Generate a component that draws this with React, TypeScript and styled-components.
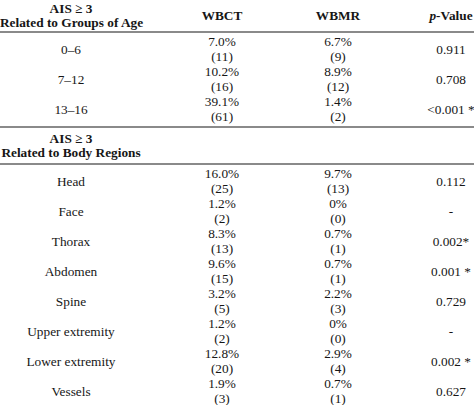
import React from "react";
import styled, { createGlobalStyle } from "styled-components";

const GlobalStyle = createGlobalStyle`
  html, body {
    margin: 0;
    padding: 0;
    background: #ffffff;
    overflow: hidden;
  }
  body {
    font-family: "Liberation Serif", "Times New Roman", serif;
    color: #161616;
  }
`;

const COLUMNS = "142px 160px 72px 154px";

const Table = styled.div`
  width: 528px;
  font-size: 13.3px;
`;

const HeadRow = styled.div<{ $height: number }>`
  display: grid;
  grid-template-columns: ${COLUMNS};
  height: ${(p) => p.$height}px;
  align-items: center;
  font-weight: 700;
  line-height: 14px;
  text-align: center;
`;

const HeadCell = styled.div`
  white-space: nowrap;
`;

const Rule = styled.div`
  height: 2px;
  background: #8a8a8a;
`;

const Body = styled.div<{ $top: number; $bottom: number }>`
  padding: ${(p) => p.$top}px 0 ${(p) => p.$bottom}px;
`;

const Row = styled.div`
  display: grid;
  grid-template-columns: ${COLUMNS};
  height: 30px;
  align-items: center;
  text-align: center;
  line-height: 15px;
`;

const Cell = styled.div`
  white-space: nowrap;
`;

const Italic = styled.span`
  font-style: italic;
`;

type DataRow = {
  label: string;
  wbct: [string, string];
  wbmr: [string, string];
  p: string;
};

const ageRows: DataRow[] = [
  { label: "0–6", wbct: ["7.0%", "(11)"], wbmr: ["6.7%", "(9)"], p: "0.911" },
  { label: "7–12", wbct: ["10.2%", "(16)"], wbmr: ["8.9%", "(12)"], p: "0.708" },
  { label: "13–16", wbct: ["39.1%", "(61)"], wbmr: ["1.4%", "(2)"], p: "<0.001 *" },
];

const regionRows: DataRow[] = [
  { label: "Head", wbct: ["16.0%", "(25)"], wbmr: ["9.7%", "(13)"], p: "0.112" },
  { label: "Face", wbct: ["1.2%", "(2)"], wbmr: ["0%", "(0)"], p: "-" },
  { label: "Thorax", wbct: ["8.3%", "(13)"], wbmr: ["0.7%", "(1)"], p: "0.002*" },
  { label: "Abdomen", wbct: ["9.6%", "(15)"], wbmr: ["0.7%", "(1)"], p: "0.001 *" },
  { label: "Spine", wbct: ["3.2%", "(5)"], wbmr: ["2.2%", "(3)"], p: "0.729" },
  { label: "Upper extremity", wbct: ["1.2%", "(2)"], wbmr: ["0%", "(0)"], p: "-" },
  { label: "Lower extremity", wbct: ["12.8%", "(20)"], wbmr: ["2.9%", "(4)"], p: "0.002 *" },
  { label: "Vessels", wbct: ["1.9%", "(3)"], wbmr: ["0.7%", "(1)"], p: "0.627" },
];

const DataRows = ({ rows }: { rows: DataRow[] }) => (
  <>
    {rows.map((r) => (
      <Row key={r.label}>
        <Cell>{r.label}</Cell>
        <Cell>
          {r.wbct[0]}
          <br />
          {r.wbct[1]}
        </Cell>
        <Cell>
          {r.wbmr[0]}
          <br />
          {r.wbmr[1]}
        </Cell>
        <Cell>{r.p}</Cell>
      </Row>
    ))}
  </>
);

export default function App() {
  return (
    <>
      <GlobalStyle />
      <Table>
        <HeadRow $height={31}>
          <HeadCell>
            AIS ≥ 3
            <br />
            Related to Groups of Age
          </HeadCell>
          <HeadCell>WBCT</HeadCell>
          <HeadCell>WBMR</HeadCell>
          <HeadCell>
            <Italic>p</Italic>-Value
          </HeadCell>
        </HeadRow>
        <Rule />
        <Body $top={1} $bottom={2}>
          <DataRows rows={ageRows} />
        </Body>
        <Rule />
        <HeadRow $height={35}>
          <HeadCell>
            AIS ≥ 3
            <br />
            Related to Body Regions
          </HeadCell>
        </HeadRow>
        <Rule />
        <Body $top={1} $bottom={0}>
          <DataRows rows={regionRows} />
        </Body>
      </Table>
    </>
  );
}
